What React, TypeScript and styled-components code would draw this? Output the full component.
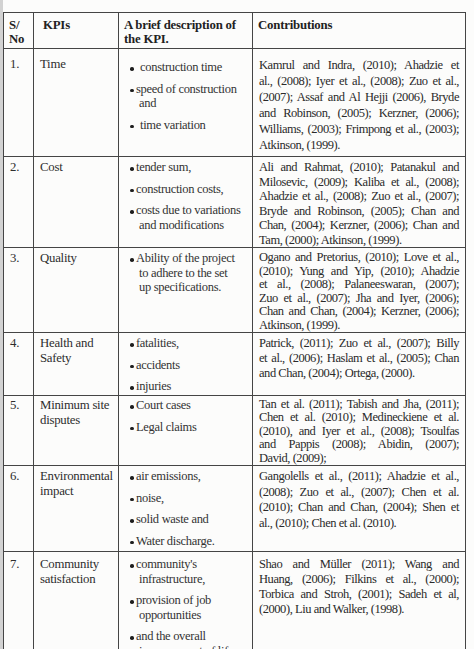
import React from 'react'
import styled, { createGlobalStyle } from 'styled-components'

type Item = { lines: string[]; pad?: number }
type Row = { no: string; kpi: string[]; items: Item[]; refs: string[]; h: number; pt: number; lh: number; lt?: number }

const rows: Row[] = [
    {
        no: '1.',
        kpi: ['Time'],
        h: 108,
        pt: 8,
        lh: 16,
        lt: 3,
        items: [
            { lines: ['construction time'], pad: 4 },
            { lines: ['speed of construction', 'and'] },
            { lines: ['time variation'], pad: 4 },
        ],
        refs: [
            'Kamrul and Indra, (2010); Ahadzie et',
            'al., (2008); Iyer et al., (2008); Zuo et al.,',
            '(2007); Assaf and Al Hejji (2006), Bryde',
            'and Robinson, (2005); Kerzner, (2006);',
            'Williams, (2003); Frimpong et al., (2003);',
            'Atkinson, (1999).',
        ],
    },
    {
        no: '2.',
        kpi: ['Cost'],
        h: 90,
        pt: 3,
        lh: 14.5,
        items: [
            { lines: ['tender sum,'] },
            { lines: ['construction costs,'] },
            { lines: ['costs due to variations', 'and modifications'] },
        ],
        refs: [
            'Ali and Rahmat, (2010); Patanakul and',
            'Milosevic, (2009); Kaliba et al., (2008);',
            'Ahadzie et al., (2008); Zuo et al., (2007);',
            'Bryde and Robinson, (2005); Chan and',
            'Chan, (2004); Kerzner, (2006); Chan and',
            'Tam, (2000); Atkinson, (1999).',
        ],
    },
    {
        no: '3.',
        kpi: ['Quality'],
        h: 85,
        pt: 3,
        lh: 13.5,
        items: [{ lines: ['Ability of the project', 'to adhere to the set', 'up specifications.'] }],
        refs: [
            'Ogano and Pretorius, (2010); Love et al.,',
            '(2010); Yung and Yip, (2010); Ahadzie',
            'et al., (2008); Palaneeswaran, (2007);',
            'Zuo et al., (2007); Jha and Iyer, (2006);',
            'Chan and Chan, (2004); Kerzner, (2006);',
            'Atkinson, (1999).',
        ],
    },
    {
        no: '4.',
        kpi: ['Health and', 'Safety'],
        h: 63,
        pt: 3,
        lh: 15,
        items: [{ lines: ['fatalities,'] }, { lines: ['accidents'] }, { lines: ['injuries'] }],
        refs: [
            'Patrick, (2011); Zuo et al., (2007); Billy',
            'et al., (2006); Haslam et al., (2005); Chan',
            'and Chan, (2004); Ortega, (2000).',
        ],
    },
    {
        no: '5.',
        kpi: ['Minimum site', 'disputes'],
        h: 69,
        pt: 2,
        lh: 13.4,
        items: [{ lines: ['Court cases'] }, { lines: ['Legal claims'] }],
        refs: [
            'Tan et al. (2011); Tabish and Jha, (2011);',
            'Chen et al. (2010); Medineckiene et al.',
            '(2010), and Iyer et al., (2008); Tsoulfas',
            'and Pappis (2008); Abidin, (2007);',
            'David, (2009);',
        ],
    },
    {
        no: '6.',
        kpi: ['Environmental', 'impact'],
        h: 86,
        pt: 3,
        lh: 15.5,
        items: [
            { lines: ['air emissions,'] },
            { lines: ['noise,'] },
            { lines: ['solid waste and'] },
            { lines: ['Water discharge.'] },
        ],
        refs: [
            'Gangolells et al., (2011); Ahadzie et al.,',
            '(2008); Zuo et al., (2007); Chen et al.',
            '(2010); Chan and Chan, (2004); Shen et',
            'al., (2010); Chen et al. (2010).',
        ],
    },
    {
        no: '7.',
        kpi: ['Community', 'satisfaction'],
        h: 120,
        pt: 5,
        lh: 15,
        items: [
            { lines: ["community's", 'infrastructure,'] },
            { lines: ['provision of job', 'opportunities'] },
            { lines: ['and the overall', 'improvement of life'] },
        ],
        refs: [
            'Shao and Müller (2011); Wang and',
            'Huang, (2006); Filkins et al., (2000);',
            'Torbica and Stroh, (2001); Sadeh et al,',
            '(2000), Liu and Walker, (1998).',
        ],
    },
]

export default function App() {
    return (
        <>
            <GlobalStyle />
            <Page>
                <Table>
                    <colgroup>
                        <col style={{ width: 30 }} />
                        <col style={{ width: 85 }} />
                        <col style={{ width: 134 }} />
                        <col style={{ width: 213 }} />
                    </colgroup>
                    <thead>
                        <tr>
                            <Th>S/<br />No</Th>
                            <Th $indent={4}>KPIs</Th>
                            <Th>A brief description of<br />the KPI.</Th>
                            <Th>Contributions</Th>
                        </tr>
                    </thead>
                    <tbody>
                        {rows.map((row) => (
                            <tr key={row.no}>
                                <Td $h={row.h} $pt={row.pt}>
                                    <Plain>{row.no}</Plain>
                                </Td>
                                <Td $h={row.h} $pt={row.pt}>
                                    {row.kpi.map((k) => (
                                        <Plain key={k}>{k}</Plain>
                                    ))}
                                </Td>
                                <Td $h={row.h} $pt={row.pt}>
                                    <List $top={row.lt ?? 0}>
                                        {row.items.map((item) => (
                                            <Bullet key={item.lines[0]}>
                                                <Dot />
                                                <BulletText $pad={item.pad ?? 0}>
                                                    {item.lines.map((l, i) => (
                                                        <BulletLine key={l} $cont={i > 0}>{l}</BulletLine>
                                                    ))}
                                                </BulletText>
                                            </Bullet>
                                        ))}
                                    </List>
                                </Td>
                                <Td $h={row.h} $pt={row.pt}>
                                    {row.refs.map((r, i) => (
                                        <RefLine key={r} $lh={row.lh} $last={i === row.refs.length - 1}>{r}</RefLine>
                                    ))}
                                </Td>
                            </tr>
                        ))}
                    </tbody>
                </Table>
            </Page>
        </>
    )
}

const GlobalStyle = createGlobalStyle`
    html, body {
        margin: 0;
        padding: 0;
        background: #fcfcfb;
    }
    body {
        font-family: "Liberation Serif", "Times New Roman", serif;
        color: #2a2a2a;
        overflow: hidden;
    }
`
const Page = styled.div`
    height: 649px;
    overflow: hidden;
    padding: 12px 0 0 0;
    box-sizing: border-box;
    border-left: 3px solid #d2d2d2;
`
const Table = styled.table`
    width: 462px;
    table-layout: fixed;
    border-collapse: collapse;
    font-size: 12.5px;
`
const Th = styled.th<{ $indent?: number }>`
    height: 36px;
    box-sizing: border-box;
    border: 1.5px solid #454545;
    padding: 5px 5px 0 ${(p) => 5 + (p.$indent ?? 0)}px;
    vertical-align: top;
    text-align: left;
    font-weight: 700;
    font-size: 12.8px;
    letter-spacing: -0.2px;
    line-height: 14px;
    color: #222;
`
const Td = styled.td<{ $h: number; $pt: number }>`
    height: ${(p) => p.$h}px;
    box-sizing: border-box;
    border: 1.5px solid #454545;
    padding: ${(p) => p.$pt}px 6px 0 6px;
    vertical-align: top;
`
const Plain = styled.div`
    white-space: nowrap;
    letter-spacing: -0.25px;
    line-height: 15px;
    font-size: 12.8px;
    color: #2e2e2e;
`
const List = styled.div<{ $top: number }>`
    display: flex;
    flex-direction: column;
    row-gap: 7px;
    padding: ${(p) => p.$top}px 0 0 5px;
`
const Bullet = styled.div`
    display: flex;
    align-items: flex-start;
`
const Dot = styled.span`
    flex: none;
    width: 3.5px;
    height: 3.5px;
    border-radius: 50%;
    background: #1e1e1e;
    margin-top: 7px;
    margin-right: 2.5px;
`
const BulletText = styled.div<{ $pad: number }>`
    padding-left: ${(p) => p.$pad}px;
    color: #333;
    letter-spacing: -0.3px;
`
const BulletLine = styled.div<{ $cont: boolean }>`
    white-space: nowrap;
    padding-left: ${(p) => (p.$cont ? 3 : 0)}px;
    line-height: 14.5px;
`
const RefLine = styled.div<{ $last: boolean; $lh: number }>`
    white-space: nowrap;
    text-align: ${(p) => (p.$last ? 'left' : 'justify')};
    text-align-last: ${(p) => (p.$last ? 'left' : 'justify')};
    letter-spacing: -0.45px;
    line-height: ${(p) => p.$lh}px;
    color: #2a2a2a;
`
